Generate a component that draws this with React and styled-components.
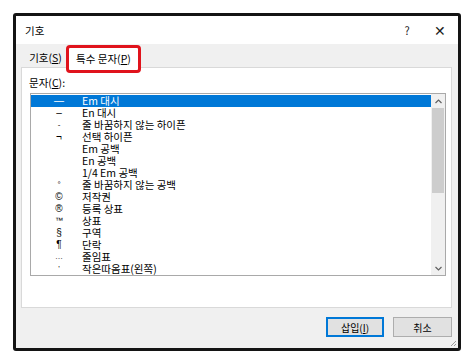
import React from "react";
import styled, { createGlobalStyle } from "styled-components";

const GlobalStyle = createGlobalStyle`
	html, body {
		margin: 0;
		padding: 0;
		background: #ffffff;
	}
	body {
		font-family: "Noto Sans CJK KR", "Noto Sans", sans-serif;
		font-size: 10px;
		color: #000;
	}
`;

const rows = [
	{ sym: "—", name: "Em 대시" },
	{ sym: "–", name: "En 대시" },
	{ sym: "-", name: "줄 바꿈하지 않는 하이픈", small: true },
	{ sym: "¬", name: "선택 하이픈" },
	{ sym: "", name: "Em 공백" },
	{ sym: "", name: "En 공백" },
	{ sym: "", name: "1/4 Em 공백" },
	{ sym: "°", name: "줄 바꿈하지 않는 공백", small: true },
	{ sym: "©", name: "저작권" },
	{ sym: "®", name: "등록 상표" },
	{ sym: "™", name: "상표", small: true },
	{ sym: "§", name: "구역" },
	{ sym: "¶", name: "단락" },
	{ sym: "…", name: "줄임표", small: true },
	{ sym: "'", name: "작은따옴표(왼쪽)", small: true },
];

const Page = styled.div`
	width: 474px;
	height: 363px;
	padding: 13px 0 0 13px;
	box-sizing: border-box;
`;

const Frame = styled.div`
	position: relative;
	width: 448px;
	height: 338px;
	box-sizing: border-box;
	border: 3px solid #141414;
	border-radius: 3px;
	display: flex;
	flex-direction: column;
	background: #f0f0f0;
`;

const TitleBar = styled.div`
	height: 28px;
	flex-shrink: 0;
	background: #ffffff;
	display: flex;
	align-items: center;
	padding: 0 0 0 9px;
`;

const Title = styled.div`
	flex: 1;
	font-size: 10.5px;
`;

const TitleButton = styled.div`
	width: ${({ $w }) => $w}px;
	text-align: center;
	font-size: ${({ $size }) => $size}px;
	color: #222;
	line-height: 1;
`;

const Body = styled.div`
	flex: 1;
	display: flex;
	flex-direction: column;
	padding: 3px 6px 0 5px;
`;

const TabRow = styled.div`
	display: flex;
	height: 20px;
	align-items: stretch;
	padding-left: 2px;
	position: relative;
	z-index: 1;
`;

const Tab = styled.div`
	position: relative;
	display: flex;
	align-items: center;
	justify-content: center;
	width: ${({ $w }) => $w}px;
	font-size: 10.5px;
	background: ${({ $active }) => ($active ? "#ffffff" : "transparent")};
	border: 1px solid ${({ $active }) => ($active ? "#d9d9d9" : "transparent")};
	border-bottom: none;
	margin-bottom: ${({ $active }) => ($active ? "-1px" : "0")};
	box-sizing: border-box;
`;

const Highlight = styled.div`
	position: absolute;
	top: -3px;
	left: -3px;
	right: -3px;
	bottom: -5px;
	border: 3px solid #e0131c;
	border-radius: 4px;
	pointer-events: none;
`;

const U = styled.span`
	text-decoration: underline;
	text-underline-offset: 1px;
`;

const Panel = styled.div`
	height: 241px;
	box-sizing: border-box;
	background: #ffffff;
	border: 1px solid #d9d9d9;
	display: flex;
	flex-direction: column;
	padding: 9px 5px 0 7px;
`;

const Label = styled.div`
	height: 12px;
	line-height: 12px;
	margin-bottom: 4px;
	font-size: 10.5px;
`;

const ListBox = styled.div`
	margin-left: 1px;
	height: 183px;
	box-sizing: border-box;
	border: 1px solid #a9a9a9;
	display: flex;
`;

const Rows = styled.div`
	flex: 1;
	padding-top: 1px;
	overflow: hidden;
`;

const Row = styled.div`
	display: flex;
	height: 12px;
	line-height: 12px;
	background: ${({ $selected }) => ($selected ? "#0078d7" : "transparent")};
	color: ${({ $selected }) => ($selected ? "#ffffff" : "#000000")};
`;

const Sym = styled.div`
	width: 51px;
	text-align: center;
	padding-left: 5px;
	box-sizing: border-box;
	font-family: "Liberation Sans", "Noto Sans", sans-serif;
	font-size: ${({ $small }) => ($small ? "8px" : "10px")};
`;

const Name = styled.div`
	white-space: nowrap;
	font-size: 10.5px;
`;

const ScrollBar = styled.div`
	width: 14px;
	background: #f0f0f0;
	display: flex;
	flex-direction: column;
	align-items: center;
`;

const Arrow = styled.div`
	height: 14px;
	width: 100%;
	display: flex;
	align-items: center;
	justify-content: center;
`;

const Thumb = styled.div`
	width: 12px;
	height: 85px;
	background: #cdcdcd;
`;

const Track = styled.div`
	flex: 1;
`;

const Footer = styled.div`
	display: flex;
	justify-content: flex-end;
	gap: 9px;
	margin-top: 9px;
`;

const Button = styled.div`
	width: ${({ $w }) => $w}px;
	height: 20px;
	box-sizing: border-box;
	background: #e1e1e1;
	border: 1px solid ${({ $default }) => ($default ? "#0078d7" : "#adadad")};
	box-shadow: ${({ $default }) => ($default ? "inset 0 0 0 1px #0078d7" : "none")};
	display: flex;
	align-items: center;
	justify-content: center;
	font-size: 10px;
`;

const Grip = styled.svg`
	position: absolute;
	right: 1px;
	bottom: 1px;
`;

const Chevron = ({ up }) => (
	<svg width="7" height="5" viewBox="0 0 7 5">
		<path
			d={up ? "M0.5 4 L3.5 1 L6.5 4" : "M0.5 1 L3.5 4 L6.5 1"}
			fill="none"
			stroke="#606060"
			strokeWidth="1.2"
		/>
	</svg>
);

export default function App() {
	return (
		<>
			<GlobalStyle />
			<Page>
				<Frame>
					<TitleBar>
						<Title>기호</Title>
						<TitleButton $w={30} $size={11}>?</TitleButton>
						<TitleButton $w={36} $size={14}>✕</TitleButton>
					</TitleBar>
					<Body>
						<TabRow>
							<Tab $w={45}>
								기호(<U>S</U>)
							</Tab>
							<Tab $w={71} $active>
								특수 문자(<U>P</U>)
								<Highlight />
							</Tab>
						</TabRow>
						<Panel>
							<Label>
								문자(<U>C</U>):
							</Label>
							<ListBox>
								<Rows>
									{rows.map((r, i) => (
										<Row key={r.name} $selected={i === 0}>
											<Sym $small={r.small}>{r.sym}</Sym>
											<Name>{r.name}</Name>
										</Row>
									))}
								</Rows>
								<ScrollBar>
									<Arrow>
										<Chevron up />
									</Arrow>
									<Thumb />
									<Track />
									<Arrow>
										<Chevron />
									</Arrow>
								</ScrollBar>
							</ListBox>
						</Panel>
						<Footer>
							<Button $w={58} $default>
								삽입(<U>I</U>)
							</Button>
							<Button $w={59}>취소</Button>
						</Footer>
					</Body>
					<Grip width="8" height="8" viewBox="0 0 8 8">
						<path d="M7 2 L2 7 M7 5 L5 7" stroke="#9a9a9a" strokeWidth="1" />
					</Grip>
				</Frame>
			</Page>
		</>
	);
}
